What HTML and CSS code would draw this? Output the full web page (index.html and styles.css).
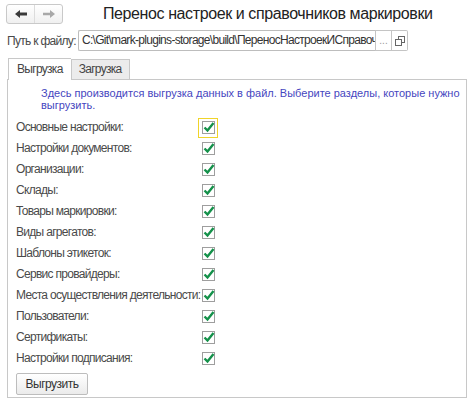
FILE: index.html
```html
<!DOCTYPE html>
<html lang="ru">
<head>
<meta charset="utf-8">
<link rel="stylesheet" href="styles.css">
</head>
<body>
<div class="header">
  <div class="nav">
    <span class="navbtn back"><svg width="14" height="10" viewBox="0 0 14 10"><path d="M1 5 L6 1 L6 3.6 L13 3.6 L13 6.4 L6 6.4 L6 9 Z" fill="#3a3a3a"/></svg></span>
    <span class="navbtn fwd"><svg width="14" height="10" viewBox="0 0 14 10"><path d="M13 5 L8 1 L8 3.8 L1 3.8 L1 6.2 L8 6.2 L8 9 Z" fill="#a8a8a8"/></svg></span>
  </div>
  <h1 class="title">Перенос настроек и справочников маркировки</h1>
</div>
<div class="pathrow">
  <span class="pathlabel">Путь к файлу:</span>
  <div class="inputgroup">
    <div class="input">C:\Git\mark-plugins-storage\build\ПереносНастроекИСправоч</div>
    <div class="ibtn dots">...</div>
    <div class="ibtn copy"><svg width="10" height="10" viewBox="0 0 10 10"><rect x="3.5" y="0.5" width="6" height="6" fill="none" stroke="#666"/><rect x="0.5" y="3.5" width="6" height="6" fill="#fff" stroke="#666"/></svg></div>
  </div>
</div>
<div class="tabs">
  <div class="tabbar">
    <div class="tab active">Выгрузка</div>
    <div class="tab">Загрузка</div>
  </div>
  <div class="panel">
    <p class="desc">Здесь производится выгрузка данных в файл. Выберите разделы, которые нужно выгрузить.</p>
    <div class="grid">
      <span class="lbl">Основные настройки:</span><span class="cbwrap focus"><span class="cb"><svg width="14" height="13" viewBox="0 0 14 13"><path d="M2.5 6.5 L5.5 9.5 L11.5 2" fill="none" stroke="#14914a" stroke-width="2.4"/></svg></span></span>
      <span class="lbl">Настройки документов:</span><span class="cbwrap"><span class="cb"><svg width="14" height="13" viewBox="0 0 14 13"><path d="M2.5 6.5 L5.5 9.5 L11.5 2" fill="none" stroke="#14914a" stroke-width="2.4"/></svg></span></span>
      <span class="lbl">Организации:</span><span class="cbwrap"><span class="cb"><svg width="14" height="13" viewBox="0 0 14 13"><path d="M2.5 6.5 L5.5 9.5 L11.5 2" fill="none" stroke="#14914a" stroke-width="2.4"/></svg></span></span>
      <span class="lbl">Склады:</span><span class="cbwrap"><span class="cb"><svg width="14" height="13" viewBox="0 0 14 13"><path d="M2.5 6.5 L5.5 9.5 L11.5 2" fill="none" stroke="#14914a" stroke-width="2.4"/></svg></span></span>
      <span class="lbl">Товары маркировки:</span><span class="cbwrap"><span class="cb"><svg width="14" height="13" viewBox="0 0 14 13"><path d="M2.5 6.5 L5.5 9.5 L11.5 2" fill="none" stroke="#14914a" stroke-width="2.4"/></svg></span></span>
      <span class="lbl">Виды агрегатов:</span><span class="cbwrap"><span class="cb"><svg width="14" height="13" viewBox="0 0 14 13"><path d="M2.5 6.5 L5.5 9.5 L11.5 2" fill="none" stroke="#14914a" stroke-width="2.4"/></svg></span></span>
      <span class="lbl">Шаблоны этикеток:</span><span class="cbwrap"><span class="cb"><svg width="14" height="13" viewBox="0 0 14 13"><path d="M2.5 6.5 L5.5 9.5 L11.5 2" fill="none" stroke="#14914a" stroke-width="2.4"/></svg></span></span>
      <span class="lbl">Сервис провайдеры:</span><span class="cbwrap"><span class="cb"><svg width="14" height="13" viewBox="0 0 14 13"><path d="M2.5 6.5 L5.5 9.5 L11.5 2" fill="none" stroke="#14914a" stroke-width="2.4"/></svg></span></span>
      <span class="lbl">Места осуществления деятельности:</span><span class="cbwrap"><span class="cb"><svg width="14" height="13" viewBox="0 0 14 13"><path d="M2.5 6.5 L5.5 9.5 L11.5 2" fill="none" stroke="#14914a" stroke-width="2.4"/></svg></span></span>
      <span class="lbl">Пользователи:</span><span class="cbwrap"><span class="cb"><svg width="14" height="13" viewBox="0 0 14 13"><path d="M2.5 6.5 L5.5 9.5 L11.5 2" fill="none" stroke="#14914a" stroke-width="2.4"/></svg></span></span>
      <span class="lbl">Сертификаты:</span><span class="cbwrap"><span class="cb"><svg width="14" height="13" viewBox="0 0 14 13"><path d="M2.5 6.5 L5.5 9.5 L11.5 2" fill="none" stroke="#14914a" stroke-width="2.4"/></svg></span></span>
      <span class="lbl">Настройки подписания:</span><span class="cbwrap"><span class="cb"><svg width="14" height="13" viewBox="0 0 14 13"><path d="M2.5 6.5 L5.5 9.5 L11.5 2" fill="none" stroke="#14914a" stroke-width="2.4"/></svg></span></span>
    </div>
    <button class="btn">Выгрузить</button>
  </div>
</div>
</body>
</html>
```
FILE: styles.css
```css
html, body {
  margin: 0;
  padding: 0;
  background: #fff;
}
body {
  width: 474px;
  height: 412px;
  overflow: hidden;
  font-family: "Liberation Sans", Arial, sans-serif;
  color: #4a4a4a;
  font-size: 12px;
  letter-spacing: -0.7px;
}
.header {
  display: flex;
  align-items: center;
  height: 20px;
  padding: 4px 0 0 6px;
}
.nav {
  display: flex;
  width: 55px;
  height: 18px;
  border: 1px solid #c9c9c9;
  border-radius: 3px;
  background: linear-gradient(#ffffff, #f0f0f0);
}
.navbtn {
  flex: 1;
  display: flex;
  align-items: center;
  justify-content: center;
}
.navbtn.back {
  border-right: 1px solid #dcdcdc;
}
.title {
  margin: 0 0 0 40px;
  font-size: 16px;
  font-weight: normal;
  letter-spacing: -0.4px;
  color: #222;
  line-height: 20px;
  white-space: nowrap;
}
.pathrow {
  display: flex;
  align-items: center;
  margin-top: 6px;
  padding-left: 7px;
  height: 21px;
}
.pathlabel {
  width: 71px;
  white-space: nowrap;
}
.inputgroup {
  display: flex;
  height: 21px;
}
.input {
  width: 288px;
  height: 19px;
  border: 1px solid #bdbdbd;
  border-right: none;
  border-radius: 2px 0 0 2px;
  padding: 0 5px 0 3px;
  line-height: 19px;
  white-space: nowrap;
  overflow: hidden;
  color: #333;
}
.ibtn {
  width: 15px;
  height: 19px;
  border: 1px solid #c4c4c4;
  display: flex;
  align-items: center;
  justify-content: center;
  background: #fff;
}
.dots {
  color: #999;
  font-size: 10px;
  letter-spacing: 0;
  line-height: 19px;
  height: 19px;
}
.copy {
  width: 15px;
  border-left: none;
  border-radius: 0 2px 2px 0;
}
.tabs {
  margin: 7px 7px 0 7px;
}
.tabbar {
  display: flex;
  align-items: flex-end;
  height: 21px;
  padding-left: 1px;
}
.tab {
  height: 19px;
  line-height: 19px;
  padding: 0 7px;
  border: 1px solid #c8c8c8;
  border-bottom: none;
  background: #ececec;
  color: #444;
}
.tab.active {
  height: 21px;
  line-height: 21px;
  padding: 0 8px;
  background: #fff;
  border-right: none;
  position: relative;
  margin-bottom: -1px;
  z-index: 1;
}
.panel {
  border: 1px solid #c8c8c8;
  height: 319px;
  padding: 0 0 0 8px;
  box-sizing: border-box;
}
.desc {
  margin: 8px 0 0 25px;
  font-size: 11px;
  letter-spacing: 0;
  line-height: 11.5px;
  color: #4646c0;
  width: 420px;
}
.grid {
  display: grid;
  grid-template-columns: 186px 13px;
  grid-auto-rows: 21px;
  margin-top: 6px;
  align-items: center;
}
.lbl {
  white-space: nowrap;
  line-height: 21px;
}
.cbwrap {
  display: flex;
  align-items: center;
  justify-content: center;
  width: 13px;
  height: 13px;
  position: relative;
}
.cbwrap.focus::before {
  content: "";
  position: absolute;
  left: -4px;
  top: -3px;
  width: 18px;
  height: 18px;
  border: 1px solid #f0d42a;
}
.cb {
  width: 11px;
  height: 11px;
  border: 1px solid #9e9e9e;
  background: #fff;
  position: relative;
  display: block;
}
.cb svg {
  position: absolute;
  left: -1px;
  top: -1px;
}
.btn {
  margin-top: 4px;
  width: 72px;
  height: 22px;
  border: 1px solid #bdbdbd;
  border-radius: 2px;
  background: linear-gradient(#ffffff, #ebebeb);
  font-family: "Liberation Sans", Arial, sans-serif;
  font-size: 12px;
  letter-spacing: -0.5px;
  color: #333;
  padding: 0;
}
```
